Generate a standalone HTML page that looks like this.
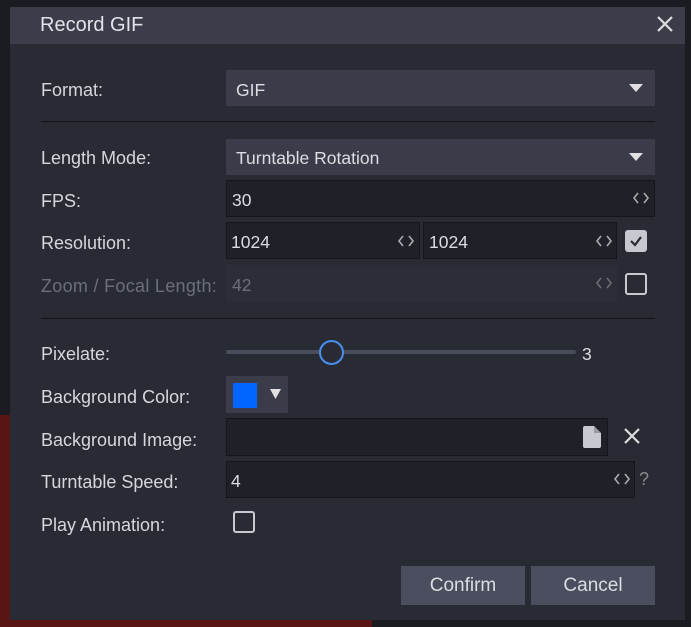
<!DOCTYPE html><html style="overflow:hidden"><head><style>
body{margin:0;width:691px;height:627px;background:#1b1c21;position:relative;overflow:hidden;font-family:"Liberation Sans",sans-serif;color:#d8d9de}
.bgred{position:absolute;left:0;top:415px;width:372px;height:212px;background:#5a1414}
.dlg{position:absolute;left:10px;top:7px;width:675px;height:613px;background:#282b34}
.hd{position:absolute;left:0;top:0;width:675px;height:37px;background:#3b3e4a}
.a{position:absolute}
.lbl{position:absolute;left:41px;font-size:18px;color:#d6d7dc}
.sel{position:absolute;left:226px;width:429px;height:36px;background:#3a3d49}
.inp{position:absolute;background:#1f2128;border:1px solid #15161a;box-sizing:border-box}
.txt{position:absolute;font-size:17.5px;color:#dcdde2}
.sep{position:absolute;left:41px;width:614px;height:1px;background:#15161a}
.cb{position:absolute;width:18px;height:18px;border:2px solid #c8c9d0;border-radius:3px}
.btn{position:absolute;top:566px;height:39px;background:#4a4e5e;font-size:19px;text-align:center;line-height:39px;color:#dcdde2}
</style></head><body>
<div class="bgred"></div>
<div class="dlg"><div class="hd"></div></div>
<div class="a" style="left:40px;top:14px;font-size:20px;color:#e2e3e7">Record GIF</div>
<svg class="a" style="left:656px;top:15px" width="18" height="18"><path d="M2 2L16 16M16 2L2 16" stroke="#ddd" stroke-width="2.2"/></svg>

<svg width="0" height="0" style="position:absolute"><defs><g id="ar"><path d="M6 2L2 7L6 12M12 2L16 7L12 12" stroke="#aaa" stroke-width="1.6" fill="none"/></g></defs></svg>

<div class="lbl" style="top:80px">Format:</div>
<div class="sel" style="top:70px"></div>
<div class="txt" style="left:236px;top:80px">GIF</div>
<svg class="a" style="left:629px;top:84px" width="14" height="9"><path d="M0 0H14L7 8Z" fill="#e0e0e0"/></svg>
<div class="sep" style="top:121px"></div>

<div class="lbl" style="top:148px">Length Mode:</div>
<div class="sel" style="top:139px"></div>
<div class="txt" style="left:236px;top:148px">Turntable Rotation</div>
<svg class="a" style="left:629px;top:153px" width="14" height="9"><path d="M0 0H14L7 8Z" fill="#e0e0e0"/></svg>

<div class="lbl" style="top:191px">FPS:</div>
<div class="inp" style="left:226px;top:180px;width:429px;height:37px"></div>
<div class="txt" style="left:232px;top:190px">30</div>
<svg class="a" style="left:632px;top:191px" width="18" height="14"><use href="#ar"/></svg>

<div class="lbl" style="top:233px">Resolution:</div>
<div class="inp" style="left:226px;top:222px;width:194px;height:37px"></div>
<div class="txt" style="left:231px;top:232px">1024</div>
<svg class="a" style="left:397px;top:234px" width="18" height="14"><use href="#ar"/></svg>
<div class="inp" style="left:423px;top:222px;width:194px;height:37px"></div>
<div class="txt" style="left:429px;top:232px">1024</div>
<svg class="a" style="left:595px;top:234px" width="18" height="14"><use href="#ar"/></svg>
<div class="a" style="left:625px;top:230px;width:22px;height:22px;background:#c8c9d0;border-radius:3px"></div>
<svg class="a" style="left:629px;top:234px" width="14" height="14"><path d="M2 7L6 11L12 3" stroke="#282b34" stroke-width="2.2" fill="none"/></svg>

<div class="lbl" style="top:276px;color:#6c6f78;letter-spacing:0.3px">Zoom / Focal Length:</div>
<div class="a" style="left:226px;top:265px;width:391px;height:37px;background:#2b2e37"></div>
<div class="txt" style="left:232px;top:275px;color:#6c6f78">42</div>
<svg class="a" style="left:595px;top:276px;opacity:.5" width="18" height="14"><use href="#ar"/></svg>
<div class="cb" style="left:625px;top:273px"></div>
<div class="sep" style="top:318px"></div>

<div class="lbl" style="top:344px">Pixelate:</div>
<div class="a" style="left:226px;top:350px;width:350px;height:4px;background:#494c5a;border-radius:2px"></div>
<div class="a" style="left:319px;top:340px;width:21px;height:21px;border:2px solid #4a8ef0;border-radius:50%;background:#282b34"></div>
<div class="txt" style="left:582px;top:344px">3</div>

<div class="lbl" style="top:387px">Background Color:</div>
<div class="a" style="left:226px;top:376px;width:62px;height:37px;background:#3a3d49"></div>
<div class="a" style="left:233px;top:383px;width:24px;height:25px;background:#0066ff"></div>
<svg class="a" style="left:270px;top:389px" width="11" height="11"><path d="M0 0H11L5.5 10Z" fill="#e0e0e0"/></svg>

<div class="lbl" style="top:430px">Background Image:</div>
<div class="inp" style="left:226px;top:418px;width:382px;height:38px"></div>
<svg class="a" style="left:582px;top:425px" width="20" height="24"><path d="M1 3Q1 1 3 1H12L19 8V21Q19 23 17 23H3Q1 23 1 21Z" fill="#c8c9d0"/><path d="M12 1V8H19" fill="#9a9ba2"/></svg>
<svg class="a" style="left:624px;top:428px" width="16" height="16"><path d="M1 1L15 15M15 1L1 15" stroke="#ddd" stroke-width="2.2"/></svg>

<div class="lbl" style="top:472px">Turntable Speed:</div>
<div class="inp" style="left:226px;top:461px;width:409px;height:37px"></div>
<div class="txt" style="left:231px;top:471px">4</div>
<svg class="a" style="left:613px;top:472px" width="18" height="14"><use href="#ar"/></svg>
<div class="a" style="left:639px;top:469px;font-size:18px;color:#888">?</div>

<div class="lbl" style="top:515px">Play Animation:</div>
<div class="cb" style="left:233px;top:511px"></div>

<div class="btn" style="left:401px;width:124px">Confirm</div>
<div class="btn" style="left:531px;width:124px">Cancel</div>
</body></html>
